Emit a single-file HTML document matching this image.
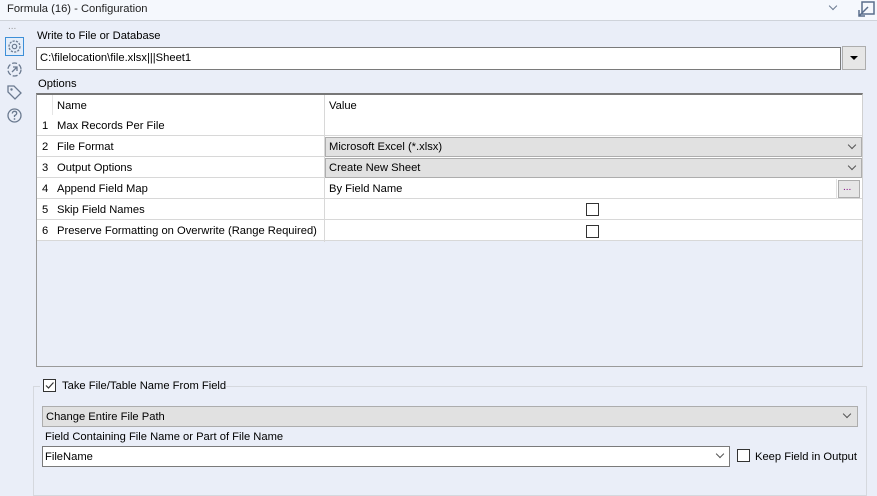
<!DOCTYPE html>
<html><head><style>
*{box-sizing:border-box;margin:0;padding:0}
body{width:877px;height:487px;background:#eaeef8;font-family:"Liberation Sans",Arial,sans-serif;font-size:11.2px;color:#000;position:relative;overflow:hidden}
.a{position:absolute}
.t{position:absolute;white-space:nowrap;line-height:14px;font-size:11.2px}
.cb{position:absolute;width:13px;height:13px;border:1px solid #333;background:#fff}
.chev{position:absolute;width:6px;height:6px;border-right:1px solid #555;border-bottom:1px solid #555;transform:rotate(45deg)}
.row{position:absolute;left:37px;width:825px;height:21px;border-bottom:1px solid #d8d8d8;background:#fff}
</style></head><body>
<div class="a" style="left:0;top:0;width:877px;height:21px;background:#f5f8fd;border-bottom:1px solid #cfd3da"></div>
<div class="t" style="left:7px;top:2px;color:#222">Formula (16) - Configuration</div>
<div class="chev" style="left:830px;top:3px;border-color:#6b7a90"></div>
<svg class="a" style="left:856px;top:1px" width="20" height="18" viewBox="0 0 20 18"><rect x="6" y="1" width="12" height="12" fill="none" stroke="#5a6e8c" stroke-width="1.5"/><path d="M12 6 L3 15 M3 9 V15 H9" fill="none" stroke="#5a6e8c" stroke-width="1.5"/></svg>
<div class="t" style="left:8px;top:20px;color:#999;font-size:10px">...</div>
<div class="a" style="left:5px;top:37px;width:19px;height:19px;border:1px solid #3d8fd8;background:#e4edf9"></div>
<svg class="a" style="left:5px;top:37px" width="19" height="19" viewBox="0 0 19 19"><circle cx="9.5" cy="9.5" r="5.5" fill="none" stroke="#6b7a90" stroke-width="1.3" stroke-dasharray="2.2 1.2"/><circle cx="9.5" cy="9.5" r="2.2" fill="none" stroke="#6b7a90" stroke-width="1.2"/></svg>
<svg class="a" style="left:5px;top:60px" width="19" height="19" viewBox="0 0 19 19"><circle cx="9.5" cy="9.5" r="6.5" fill="none" stroke="#6b7a90" stroke-width="1.3" stroke-dasharray="5 2"/><path d="M7 12 L12 7 M8 7 H12 V11" fill="none" stroke="#6b7a90" stroke-width="1.3"/></svg>
<svg class="a" style="left:5px;top:83px" width="19" height="19" viewBox="0 0 19 19"><path d="M3 3 H9 L16 10 L10 16 L3 9 Z" fill="none" stroke="#6b7a90" stroke-width="1.3"/><circle cx="6.5" cy="6.5" r="1.2" fill="#6b7a90"/></svg>
<svg class="a" style="left:5px;top:106px" width="19" height="19" viewBox="0 0 19 19"><circle cx="9.5" cy="9.5" r="6.5" fill="none" stroke="#6b7a90" stroke-width="1.3"/><path d="M7.3 7.5 Q7.5 5.3 9.5 5.3 Q11.7 5.3 11.7 7.3 Q11.7 8.7 9.5 9.6 V11" fill="none" stroke="#6b7a90" stroke-width="1.3"/><circle cx="9.5" cy="13" r="0.9" fill="#6b7a90"/></svg>

<div class="t" style="left:37px;top:29px">Write to File or Database</div>
<div class="a" style="left:36px;top:47px;width:805px;height:23px;background:#fff;border:1px solid #7a7a7a"></div>
<div class="t" style="left:40px;top:51px">C:\filelocation\file.xlsx|||Sheet1</div>
<div class="a" style="left:842px;top:46px;width:24px;height:24px;background:#e6e6e6;border:1px solid #adadad"></div>
<div class="a" style="left:850px;top:56px;border-left:4px solid transparent;border-right:4px solid transparent;border-top:4px solid #000"></div>

<div class="t" style="left:38px;top:77px">Options</div>
<div class="a" style="left:36px;top:93px;width:827px;height:274px;border:1px solid #9a9a9a;border-top:2px solid #777;border-right:1px solid #d0d0d0;background:#eaeef8"></div>
<div class="a" style="left:37px;top:95px;width:825px;height:41px;background:#fff;border-bottom:1px solid #d8d8d8"></div>
<div class="a" style="left:52px;top:95px;width:1px;height:20px;background:#e5e5e5"></div>
<div class="t" style="left:57px;top:99px">Name</div>
<div class="t" style="left:329px;top:99px">Value</div>
<div class="t" style="left:42px;top:119px">1</div><div class="t" style="left:57px;top:119px">Max Records Per File</div>
<div class="row" style="top:136px"></div>
<div class="a" style="left:325px;top:137px;width:537px;height:20px;background:#e1e1e1;border:1px solid #adadad"></div>
<div class="t" style="left:42px;top:140px">2</div><div class="t" style="left:57px;top:140px">File Format</div>
<div class="t" style="left:329px;top:140px">Microsoft Excel (*.xlsx)</div>
<div class="chev" style="left:849px;top:142px"></div>
<div class="row" style="top:157px"></div>
<div class="a" style="left:325px;top:158px;width:537px;height:20px;background:#e1e1e1;border:1px solid #adadad"></div>
<div class="t" style="left:42px;top:161px">3</div><div class="t" style="left:57px;top:161px">Output Options</div>
<div class="t" style="left:329px;top:161px">Create New Sheet</div>
<div class="chev" style="left:849px;top:163px"></div>
<div class="row" style="top:178px"></div>
<div class="t" style="left:42px;top:182px">4</div><div class="t" style="left:57px;top:182px">Append Field Map</div>
<div class="t" style="left:329px;top:182px">By Field Name</div>
<div class="a" style="left:836px;top:179px;width:1px;height:20px;background:#e0e0e0"></div>
<div class="a" style="left:838px;top:180px;width:22px;height:18px;background:#e6e6e6;border:1px solid #adadad"></div>
<div class="t" style="left:843px;top:181px;color:#800080;font-size:10px">...</div>
<div class="row" style="top:199px"></div>
<div class="t" style="left:42px;top:203px">5</div><div class="t" style="left:57px;top:203px">Skip Field Names</div>
<div class="cb" style="left:586px;top:203px"></div>
<div class="row" style="top:220px"></div>
<div class="t" style="left:42px;top:224px">6</div><div class="t" style="left:57px;top:224px">Preserve Formatting on Overwrite (Range Required)</div>
<div class="cb" style="left:586px;top:225px"></div>
<div class="a" style="left:324px;top:95px;width:1px;height:147px;background:#d8d8d8"></div>

<div class="a" style="left:33px;top:386px;width:834px;height:110px;border:1px solid #d5d8de"></div>
<div class="a" style="left:40px;top:378px;width:186px;height:16px;background:#eaeef8"></div>
<div class="cb" style="left:43px;top:379px;border-color:#333"></div>
<svg class="a" style="left:43px;top:379px" width="13" height="13"><path d="M3 6.5 L5.5 9 L10.5 3.5" fill="none" stroke="#333" stroke-width="1.2"/></svg>
<div class="t" style="left:62px;top:379px">Take File/Table Name From Field</div>
<div class="a" style="left:42px;top:406px;width:816px;height:21px;background:#e1e1e1;border:1px solid #adadad"></div>
<div class="t" style="left:46px;top:410px">Change Entire File Path</div>
<div class="chev" style="left:844px;top:411px"></div>
<div class="t" style="left:45px;top:430px">Field Containing File Name or Part of File Name</div>
<div class="a" style="left:42px;top:446px;width:688px;height:21px;background:#fff;border:1px solid #7a7a7a"></div>
<div class="t" style="left:45px;top:450px">FileName</div>
<div class="chev" style="left:717px;top:451px"></div>
<div class="cb" style="left:737px;top:449px"></div>
<div class="t" style="left:755px;top:450px">Keep Field in Output</div>
</body></html>
